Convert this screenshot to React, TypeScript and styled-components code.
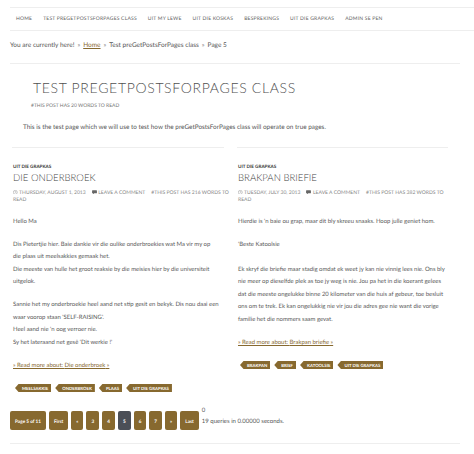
import React from "react";
import styled, { createGlobalStyle } from "styled-components";

const BROWN = "#87692f";
const ACTIVE = "#4b4f57";

const GlobalStyle = createGlobalStyle`
  html, body { margin: 0; padding: 0; background: #fff; }
  body {
    font-family: Lato, "Open Sans", "Liberation Sans", sans-serif;
    color: #555;
    text-rendering: geometricPrecision;
  }
  * { box-sizing: border-box; }
`;

const Page = styled.div`
  width: 474px;
  padding-left: 10px;
  overflow: hidden;
`;

const Nav = styled.nav`
  margin-top: 7px;
  height: 24px;
  border-top: 1px solid #eeeeee;
  border-bottom: 1px solid #eeeeee;
  display: flex;
  align-items: center;
  gap: 11px;
  padding-left: 6px;
`;

const NavItem = styled.span`
  font-size: 5px;
  text-transform: uppercase;
  color: #666;
  letter-spacing: 0.2px;
  white-space: nowrap;
`;

const Breadcrumb = styled.div`
  margin-top: 10px;
  font-size: 6.5px;
  line-height: 10px;
  color: #555;
  white-space: nowrap;
`;

const Sep = styled.span`
  margin: 0 3px;
  color: #777;
`;

const Link = styled.a`
  color: ${BROWN};
  text-decoration: underline;
`;

const Intro = styled.section`
  margin-top: 12px;
  width: 450px;
  border-top: 1px solid #eeeeee;
  padding-top: 16px;
`;

const PageTitle = styled.h1`
  margin: 0;
  padding-left: 23px;
  font-size: 14px;
  line-height: 16px;
  font-weight: 300;
  color: #505050;
  text-transform: uppercase;
  letter-spacing: 0.68px;
  white-space: nowrap;
`;

const WordCount = styled.div`
  margin-top: 6.5px;
  padding-left: 21px;
  font-size: 5px;
  line-height: 7px;
  text-transform: uppercase;
  color: #777;
`;

const IntroText = styled.p`
  margin: 13.5px 0 0;
  padding-left: 13px;
  font-size: 6.4px;
  line-height: 10px;
  color: #555;
  white-space: nowrap;
`;

const Columns = styled.div`
  margin-top: 14px;
  margin-left: 2px;
  display: grid;
  grid-template-columns: 212px 211px;
  column-gap: 13px;
  align-items: start;
`;

const Post = styled.article`
  border-top: 1px solid #eeeeee;
  padding-top: 14.5px;
  padding-left: 1px;
`;

const Category = styled.div`
  font-size: 4.6px;
  line-height: 7px;
  font-weight: 700;
  text-transform: uppercase;
  color: #333;
`;

const PostTitle = styled.h2`
  margin: 3.5px 0 0;
  font-size: 9.6px;
  line-height: 12px;
  font-weight: 300;
  text-transform: uppercase;
  color: #444;
  white-space: nowrap;
`;

const Meta = styled.div`
  margin-top: 4.5px;
  font-size: 5.05px;
  line-height: 7px;
  text-transform: uppercase;
  color: #888;
  white-space: nowrap;
`;

const MetaItem = styled.span`
  margin-right: 6px;
  svg {
    display: inline-block;
    vertical-align: -0.5px;
    margin-right: 1.5px;
  }
`;

const Body = styled.div`
  margin-top: 12.25px;
  font-size: 5.95px;
  line-height: 12.5px;
  color: #5a5a5a;
`;

const Para = styled.p<{ $gap?: number }>`
  margin: 0 0 ${(p) => p.$gap ?? 10.5}px;
  white-space: nowrap;
`;

const ReadMore = styled.a`
  display: block;
  font-size: 5.95px;
  line-height: 12.5px;
  color: ${BROWN};
  text-decoration: underline;
  white-space: nowrap;
`;

const Tags = styled.div`
  margin-top: 11.75px;
  padding-left: 2px;
  display: flex;
  gap: 4px;
`;

const Tag = styled.span`
  height: 8px;
  display: inline-flex;
  align-items: center;
  padding: 0 3px 0 7px;
  background: ${BROWN};
  color: #fff;
  font-size: 4.3px;
  font-weight: 700;
  text-transform: uppercase;
  white-space: nowrap;
  clip-path: polygon(3.5px 0, 100% 0, 100% 100%, 3.5px 100%, 0 50%);
`;

const FooterRow = styled.div`
  margin-top: 19px;
  display: flex;
  align-items: flex-start;
  gap: 3px;
`;

const Pager = styled.div`
  display: flex;
  gap: 3px;
`;

const PageButton = styled.span<{ $active?: boolean }>`
  height: 19px;
  min-width: 12px;
  padding: 0 5px;
  display: inline-flex;
  align-items: center;
  justify-content: center;
  border-radius: 2px;
  background: ${(p) => (p.$active ? ACTIVE : BROWN)};
  color: #fff;
  font-size: 4.7px;
  font-weight: 700;
  white-space: nowrap;
`;

const Stats = styled.div`
  margin-top: -6.5px;
  font-size: 6px;
  line-height: 11.5px;
  color: #555;
  white-space: nowrap;
`;

const BottomRule = styled.div`
  margin-top: 13px;
  width: 450px;
  height: 20px;
  border-top: 1px solid #eeeeee;
`;

const ClockIcon = () => (
  <svg width="4.6" height="4.6" viewBox="0 0 10 10" fill="none" stroke="#888" strokeWidth="1">
    <circle cx="5" cy="5" r="4.3" />
    <path d="M5 2.4V5h2" />
  </svg>
);

const CommentIcon = () => (
  <svg width="5" height="4.4" viewBox="0 0 12 10" fill="#666">
    <path d="M1 0.5h10a0.8 0.8 0 0 1 .8.8v5.6a0.8 0.8 0 0 1-.8.8H5.5L2.5 9.8V7.7H1a0.8 0.8 0 0 1-.8-.8V1.3A0.8 0.8 0 0 1 1 0.5z" />
  </svg>
);

type PostData = {
  title: string;
  date: string;
  words: number;
  paras: { lines: string[]; gap?: number }[];
  readMore: string;
  tags: string[];
};

const posts: PostData[] = [
  {
    title: "Die onderbroek",
    date: "Thursday, August 1, 2013",
    words: 216,
    paras: [
      { lines: ["Hello Ma"] },
      {
        lines: [
          "Dis Pietertjie hier. Baie dankie vir die oulike onderbroekies wat Ma vir my op",
          "die plaas uit meelsakkies gemaak het.",
          "Die meeste van hulle het groot reaksie by die meisies hier by die universiteit",
          "uitgelok.",
        ],
      },
      {
        lines: [
          "Sannie het my onderbroekie heel aand net stip gesit en bekyk. Dis nou daai een",
          "waar voorop staan 'SELF-RAISING'.",
          "Heel aand nie 'n oog verroer nie.",
          "Sy het lateraand net gesê 'Dit werkie !'",
        ],
      },
    ],
    readMore: "Die onderbroek",
    tags: ["Meelsakkie", "Onderbroek", "Plaas", "Uit die grapkas"],
  },
  {
    title: "Brakpan briefie",
    date: "Tuesday, July 30, 2013",
    words: 382,
    paras: [
      { lines: ["Hierdie is 'n baie ou grap, maar dit bly skreeu snaaks. Hoop julle geniet hom."] },
      { lines: ["'Beste Katoolsie"], gap: 12.5 },
      {
        lines: [
          "Ek skryf die briefie maar stadig omdat ek weet jy kan nie vinnig lees nie. Ons bly",
          "nie meer op dieselfde plek as toe jy weg is nie. Jou pa het in die koerant gelees",
          "dat die meeste ongelukke binne 20 kilometer van die huis af gebeur, toe besluit",
          "ons om te trek. Ek kan ongelukkig nie vir jou die adres gee nie want die vorige",
          "familie het die nommers saam gevat.",
        ],
      },
    ],
    readMore: "Brakpan briefie",
    tags: ["Brakpan", "Brief", "Katoolsie", "Uit die grapkas"],
  },
];

const navItems = [
  "Home",
  "Test preGetPostsForPages class",
  "Uit my lewe",
  "Uit die koskas",
  "Besprekings",
  "Uit die grapkas",
  "Admin se pen",
];

const pages: { label: string; active?: boolean }[] = [
  { label: "Page 5 of 11" },
  { label: "First" },
  { label: "«" },
  { label: "3" },
  { label: "4" },
  { label: "5", active: true },
  { label: "6" },
  { label: "7" },
  { label: "»" },
  { label: "Last" },
];

export default function App() {
  return (
    <>
      <GlobalStyle />
      <Page>
        <Nav>
          {navItems.map((n) => (
            <NavItem key={n}>{n}</NavItem>
          ))}
        </Nav>
        <Breadcrumb>
          You are currently here!<Sep>»</Sep>
          <Link>Home</Link>
          <Sep>»</Sep>Test preGetPostsForPages class<Sep>»</Sep>Page 5
        </Breadcrumb>
        <Intro>
          <PageTitle>Test preGetPostsForPages class</PageTitle>
          <WordCount>#This post has 20 words to read</WordCount>
          <IntroText>
            This is the test page which we will use to test how the preGetPostsForPages class will operate on true pages.
          </IntroText>
        </Intro>
        <Columns>
          {posts.map((p) => (
            <Post key={p.title}>
              <Category>Uit die grapkas</Category>
              <PostTitle>{p.title}</PostTitle>
              <Meta>
                <MetaItem>
                  <ClockIcon />
                  {p.date}
                </MetaItem>
                <MetaItem>
                  <CommentIcon />
                  Leave a comment
                </MetaItem>
                #This post has {p.words} words to
                <br />
                read
              </Meta>
              <Body>
                {p.paras.map((para, i) => (
                  <Para key={i} $gap={para.gap}>
                    {para.lines.map((l, j) => (
                      <React.Fragment key={j}>
                        {j > 0 && <br />}
                        {l}
                      </React.Fragment>
                    ))}
                  </Para>
                ))}
                <ReadMore>» Read more about: {p.readMore} »</ReadMore>
              </Body>
              <Tags>
                {p.tags.map((t) => (
                  <Tag key={t}>{t}</Tag>
                ))}
              </Tags>
            </Post>
          ))}
        </Columns>
        <FooterRow>
          <Pager>
            {pages.map((pg) => (
              <PageButton key={pg.label} $active={pg.active}>
                {pg.label}
              </PageButton>
            ))}
          </Pager>
          <Stats>
            0
            <br />
            19 queries in 0.00000 seconds.
          </Stats>
        </FooterRow>
        <BottomRule />
      </Page>
    </>
  );
}
